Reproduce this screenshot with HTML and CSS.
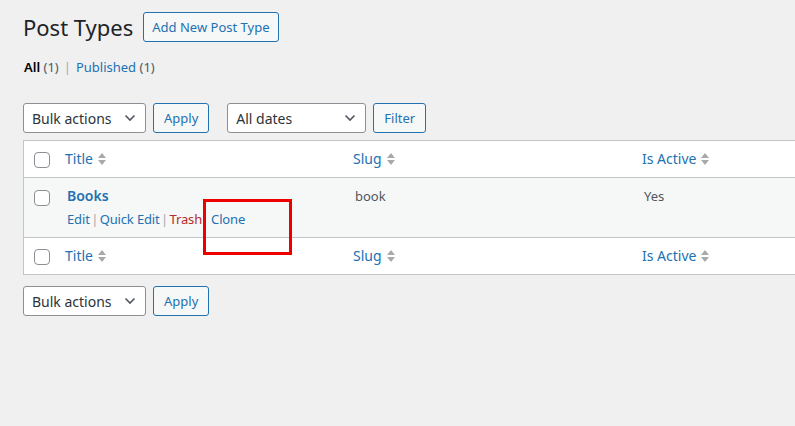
FILE: index.html
```html
<!DOCTYPE html>
<html lang="en">
<head>
  <meta charset="UTF-8" />
  <title>Post Types</title>
  <link rel="stylesheet" href="styles.css">
</head>
<body>
  <div class="wrap">
    <!-- Page heading -->
    <div class="page-heading">
      <h1>Post Types</h1>
      <a href="#" class="page-title-action">Add New Post Type</a>
    </div>

    <!-- Status filters -->
    <ul class="subsubsub">
      <li><a href="#" class="current">All <span class="count">(1)</span></a></li>
      <li class="sep">|</li>
      <li><a href="#">Published <span class="count">(1)</span></a></li>
    </ul>

    <!-- Top table nav -->
    <div class="tablenav">
      <div class="fake-select bulk">
        <span>Bulk actions</span>
        <svg class="chevron" width="12" height="8" viewBox="0 0 12 8"><path d="M1.5 1.5 L6 6 L10.5 1.5" fill="none" stroke="#50575e" stroke-width="1.6"/></svg>
      </div>
      <button class="button">Apply</button>
      <div class="fake-select dates">
        <span>All dates</span>
        <svg class="chevron" width="12" height="8" viewBox="0 0 12 8"><path d="M1.5 1.5 L6 6 L10.5 1.5" fill="none" stroke="#50575e" stroke-width="1.6"/></svg>
      </div>
      <button class="button">Filter</button>
    </div>

    <!-- List table -->
    <div class="table-clip">
      <table class="list-table">
        <thead>
          <tr>
            <td class="check-column"><span class="checkbox"></span></td>
            <th class="col-title"><a href="#">Title <svg class="sort" width="10" height="16" viewBox="0 0 10 16"><path d="M1 7 L5 2 L9 7 Z M1 9 L5 14 L9 9 Z" fill="#a7aaad"/></svg></a></th>
            <th class="col-slug"><a href="#">Slug <svg class="sort" width="10" height="16" viewBox="0 0 10 16"><path d="M1 7 L5 2 L9 7 Z M1 9 L5 14 L9 9 Z" fill="#a7aaad"/></svg></a></th>
            <th class="col-active"><a href="#">Is Active <svg class="sort" width="10" height="16" viewBox="0 0 10 16"><path d="M1 7 L5 2 L9 7 Z M1 9 L5 14 L9 9 Z" fill="#a7aaad"/></svg></a></th>
          </tr>
        </thead>
        <tbody>
          <tr class="alternate">
            <th class="check-column"><span class="checkbox"></span></th>
            <td class="col-title">
              <strong><a href="#" class="row-title">Books</a></strong>
              <div class="row-actions"><a href="#">Edit</a><span class="sep">|</span><a href="#">Quick Edit</a><span class="sep">|</span><a href="#" class="trash">Trash</a><span class="sep tight">|</span><a href="#">Clone</a></div>
            </td>
            <td class="col-slug">book</td>
            <td class="col-active">Yes</td>
          </tr>
        </tbody>
        <tfoot>
          <tr>
            <td class="check-column"><span class="checkbox"></span></td>
            <th class="col-title"><a href="#">Title <svg class="sort" width="10" height="16" viewBox="0 0 10 16"><path d="M1 7 L5 2 L9 7 Z M1 9 L5 14 L9 9 Z" fill="#a7aaad"/></svg></a></th>
            <th class="col-slug"><a href="#">Slug <svg class="sort" width="10" height="16" viewBox="0 0 10 16"><path d="M1 7 L5 2 L9 7 Z M1 9 L5 14 L9 9 Z" fill="#a7aaad"/></svg></a></th>
            <th class="col-active"><a href="#">Is Active <svg class="sort" width="10" height="16" viewBox="0 0 10 16"><path d="M1 7 L5 2 L9 7 Z M1 9 L5 14 L9 9 Z" fill="#a7aaad"/></svg></a></th>
          </tr>
        </tfoot>
      </table>
    </div>

    <!-- Bottom table nav -->
    <div class="tablenav bottom">
      <div class="fake-select bulk">
        <span>Bulk actions</span>
        <svg class="chevron" width="12" height="8" viewBox="0 0 12 8"><path d="M1.5 1.5 L6 6 L10.5 1.5" fill="none" stroke="#50575e" stroke-width="1.6"/></svg>
      </div>
      <button class="button">Apply</button>
    </div>
  </div>

  <!-- Screenshot annotation -->
  <div class="highlight-box"></div>
</body>
</html>
```

FILE: styles.css
```css
html, body {
  margin: 0;
  overflow: hidden;
}

body {
  background: #f0f0f1;
  color: #1d2327;
  font-family: "Noto Sans", "Open Sans", sans-serif;
  font-size: 13px;
  position: relative;
  height: 426px;
}

a {
  color: #2271b1;
  text-decoration: none;
}

.wrap {
  padding-left: 23px;
  padding-top: 12px;
}

.page-heading {
  display: flex;
  align-items: center;
  gap: 10px;
  height: 30px;
}

.page-heading h1 {
  margin: 0;
  font-size: 22px;
  font-weight: 400;
  line-height: 30px;
}

.page-title-action {
  border: 1px solid #2271b1;
  border-radius: 3px;
  background: #f6f7f7;
  padding: 0 8px;
  height: 28px;
  line-height: 28px;
  font-size: 13px;
}

.subsubsub {
  list-style: none;
  margin: 15px 0 0 1px;
  padding: 0;
  display: flex;
  gap: 5px;
  color: #50575e;
  height: 20px;
  line-height: 20px;
}

.subsubsub .sep {
  color: #a7aaad;
}

.subsubsub a.current {
  color: #000;
  font-weight: 600;
}

.subsubsub .count {
  color: #50575e;
  font-weight: 400;
}

.tablenav {
  display: flex;
  align-items: center;
  gap: 7px;
  margin-top: 26px;
  height: 30px;
  margin-bottom: 7px;
}

.tablenav.bottom {
  margin-top: 11px;
}

.fake-select {
  box-sizing: border-box;
  height: 30px;
  border: 1px solid #8c8f94;
  border-radius: 3px;
  background: #fff;
  display: flex;
  align-items: center;
  justify-content: space-between;
  padding: 0 9px 0 8px;
  font-size: 14px;
  color: #2c3338;
}

.fake-select.bulk {
  width: 123px;
}

.fake-select.dates {
  width: 139px;
  margin-left: 11px;
}

.button {
  box-sizing: border-box;
  height: 30px;
  border: 1px solid #2271b1;
  border-radius: 3px;
  background: #f6f7f7;
  color: #2271b1;
  font-family: inherit;
  font-size: 13px;
  padding: 0 10px;
}

.table-clip {
  width: 800px;
}

.list-table {
  width: 900px;
  border-collapse: collapse;
  background: #fff;
  border: 1px solid #c3c4c7;
  table-layout: fixed;
}

.list-table th,
.list-table td {
  text-align: left;
  vertical-align: top;
  font-weight: 400;
}

.list-table thead tr,
.list-table tfoot tr {
  height: 36px;
}

.list-table thead th,
.list-table thead td {
  border-bottom: 1px solid #c3c4c7;
}

.list-table tfoot th,
.list-table tfoot td {
  border-top: 1px solid #c3c4c7;
}

.list-table thead th,
.list-table tfoot th {
  padding: 8px 10px 8px 9px;
  font-size: 14px;
  line-height: 20px;
}

.list-table th a {
  display: inline-flex;
  align-items: center;
  gap: 4px;
}

.sort {
  display: block;
}

.check-column {
  width: 22px;
  padding: 11px 0 0 10px;
}

.list-table .col-title {
  width: 269px;
}

.list-table .col-slug {
  width: 270px;
}

.checkbox {
  display: block;
  box-sizing: border-box;
  width: 16px;
  height: 16px;
  border: 1px solid #8c8f94;
  border-radius: 4px;
  background: #fff;
}

.list-table tbody tr {
  background: #f6f7f7;
  height: 59px;
}

.list-table tbody td {
  padding: 8px 11px;
  font-size: 13px;
  line-height: 20px;
  color: #50575e;
}

.list-table tbody .check-column {
  padding-top: 12px;
}

.row-title {
  font-size: 14px;
  font-weight: 600;
}

.row-actions {
  margin-top: 3px;
  font-size: 13px;
  letter-spacing: -0.15px;
  white-space: nowrap;
}

.row-actions .sep {
  color: #a7aaad;
  margin: 0 1.5px;
}

.row-actions .sep.tight {
  margin: 0 3px 0 -1px;
}

.row-actions .trash {
  color: #b32d2e;
}

.highlight-box {
  position: absolute;
  left: 203px;
  top: 199px;
  width: 83px;
  height: 50px;
  border: 3px solid #ee0000;
}
```
